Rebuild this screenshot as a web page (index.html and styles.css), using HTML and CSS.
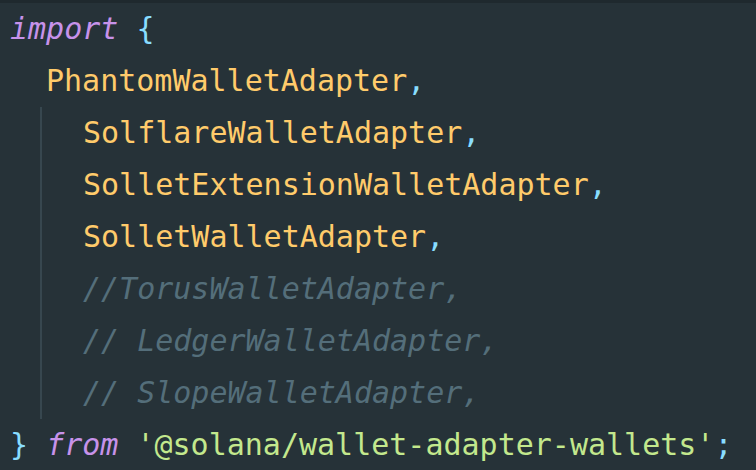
FILE: index.html
```html
<!DOCTYPE html>
<html>
<head>
<meta charset="utf-8">
<link rel="stylesheet" href="styles.css">
</head>
<body>
<div class="editor">
  <div class="line"><span class="kw">import</span> <span class="punc">{</span></div>
  <div class="line ind1"><span class="cls">PhantomWalletAdapter</span><span class="punc">,</span></div>
  <div class="block">
    <div class="line"><span class="cls">SolflareWalletAdapter</span><span class="punc">,</span></div>
    <div class="line"><span class="cls">SolletExtensionWalletAdapter</span><span class="punc">,</span></div>
    <div class="line"><span class="cls">SolletWalletAdapter</span><span class="punc">,</span></div>
    <div class="line"><span class="cm">//TorusWalletAdapter,</span></div>
    <div class="line"><span class="cm">// LedgerWalletAdapter,</span></div>
    <div class="line"><span class="cm">// SlopeWalletAdapter,</span></div>
  </div>
  <div class="line"><span class="punc">}</span> <span class="kw">from</span> <span class="str">'@solana/wallet-adapter-wallets'</span><span class="punc">;</span></div>
</div>
</body>
</html>
```
FILE: styles.css
```css
html, body {
  margin: 0;
  padding: 0;
  background: #263238;
  height: 100%;
}
body {
  border-top: 3px solid #1f292e;
  box-sizing: border-box;
}
.editor {
  font-family: "DejaVu Sans Mono", monospace;
  font-size: 30px;
  line-height: 52px;
  color: #eeffff;
  padding-left: 10px;
}
.line {
  height: 52px;
  white-space: pre;
}
.ind1 {
  padding-left: 36px;
}
.block {
  margin-left: 30px;
  border-left: 2px solid #37474f;
  padding-left: 41px;
}
.kw {
  color: #c792ea;
  font-style: italic;
}
.punc {
  color: #89ddff;
}
.cls {
  color: #ffcb6b;
}
.cm {
  color: #546e7a;
  font-style: italic;
}
.str {
  color: #c3e88d;
}
```
